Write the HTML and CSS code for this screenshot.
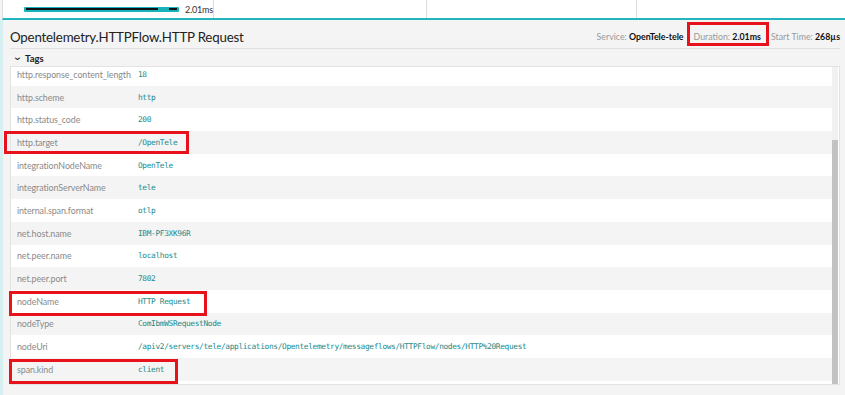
FILE: index.html
```html
<!DOCTYPE html>
<html>
<head>
<meta charset="utf-8">
<link rel="stylesheet" href="styles.css">
</head>
<body>
<div class="page">
  <div class="timeline">
    <div class="tl-cell tl-first">
      <div class="bar"><div class="bar-inner"></div><div class="bar-tail"></div></div>
      <span class="bar-label">2.01ms</span>
    </div>
    <div class="tl-cell tl-mid"></div>
    <div class="tl-cell tl-mid2"></div>
    <div class="tl-cell tl-last"></div>
  </div>
  <div class="detail">
    <div class="header">
      <h1 class="title">Opentelemetry.HTTPFlow.HTTP Request</h1>
      <div class="meta">
        <span class="meta-item">Service: <b>OpenTele-tele</b></span>
        <span class="meta-sep"></span>
        <span class="meta-item">Duration: <b>2.01ms</b></span>
        <span class="meta-item">Start Time: <b>268µs</b></span>
      </div>
    </div>
    <div class="tags-head"><span class="chev">&#8964;</span> Tags</div>
    <div class="table-wrap">
      <div class="table">
        <div class="row first"><span class="k">http.response_content_length</span><span class="v">18</span></div>
        <div class="row"><span class="k">http.scheme</span><span class="v">http</span></div>
        <div class="row"><span class="k">http.status_code</span><span class="v">200</span></div>
        <div class="row"><span class="k">http.target</span><span class="v">/OpenTele</span></div>
        <div class="row"><span class="k">integrationNodeName</span><span class="v">OpenTele</span></div>
        <div class="row"><span class="k">integrationServerName</span><span class="v">tele</span></div>
        <div class="row"><span class="k">internal.span.format</span><span class="v">otlp</span></div>
        <div class="row"><span class="k">net.host.name</span><span class="v">IBM-PF3XK96R</span></div>
        <div class="row"><span class="k">net.peer.name</span><span class="v">localhost</span></div>
        <div class="row"><span class="k">net.peer.port</span><span class="v">7802</span></div>
        <div class="row"><span class="k">nodeName</span><span class="v">HTTP Request</span></div>
        <div class="row"><span class="k">nodeType</span><span class="v">ComIbmWSRequestNode</span></div>
        <div class="row"><span class="k">nodeUri</span><span class="v">/apiv2/servers/tele/applications/Opentelemetry/messageflows/HTTPFlow/nodes/HTTP%20Request</span></div>
        <div class="row"><span class="k">span.kind</span><span class="v">client</span></div>
      </div>
      <div class="scrollbar"><div class="thumb"></div></div>
    </div>
  </div>
  <div class="mark mark-duration"></div>
  <div class="mark mark-target"></div>
  <div class="mark mark-node"></div>
  <div class="mark mark-kind"></div>
</div>
</body>
</html>
```

FILE: styles.css
```css
* { box-sizing: border-box; }
html, body { margin: 0; padding: 0; }
body {
  width: 845px;
  height: 395px;
  overflow: hidden;
  background: #f4f4f4;
  font-family: Lato, "Open Sans", sans-serif;
}
.page { position: relative; width: 845px; height: 395px; }

.timeline {
  display: flex;
  height: 20px;
  background: #fff;
  border-bottom: 2px solid #22b5be;
  border-left: 1px solid #ddd;
  margin-left: 2px;
}
.tl-cell { height: 18px; border-right: 1px solid #ddd; }
.tl-first { width: 211px; display: flex; align-items: center; padding-left: 21px; }
.tl-mid { width: 213px; }
.tl-mid2 { width: 210px; }
.tl-last { flex: 1; border-right: none; }
.bar {
  width: 160px; height: 5px; background: #17b3bb; border-radius: 1px;
  position: relative; display: flex; align-items: center;
}
.bar-inner { position: absolute; left: 2px; width: 132px; height: 2px; background: #111; }
.bar-tail { position: absolute; right: 2px; width: 8px; height: 2px; background: #111; }
.bar-label { font-size: 9px; color: #333; margin-left: 6px; letter-spacing: -0.2px; }

.detail {
  border-left: 3px solid #d6f0f2;
  padding: 0 5px 0 7px;
  height: 375px;
}
.header {
  display: flex;
  align-items: flex-end;
  justify-content: space-between;
  height: 29px;
  border-bottom: 1px solid #e0e0e0;
  padding-bottom: 2px;
}
.title {
  margin: 0;
  font-weight: 400;
  font-size: 13.3px;
  letter-spacing: -0.2px;
  color: #222;
  line-height: 18px;
}
.meta { display: flex; align-items: center; font-size: 8.8px; color: #999; line-height: 14px; padding-bottom: 2px; }
.meta b { color: #111; font-weight: 700; }
.meta-item { margin-left: 10px; }
.meta-sep { width: 1px; height: 12px; background: #ddd; margin-left: 4px; margin-right: -5px; }

.tags-head {
  font-size: 9.5px; font-weight: 700; color: #222;
  height: 17px; line-height: 18px; padding-left: 3px;
}
.chev { display: inline-block; font-weight: 400; font-size: 10px; transform: scaleX(1.3); margin-right: 2px; position: relative; top: -2px; }

.table-wrap {
  display: flex;
  height: 319px;
  border: 1px solid #e3e3e3;
  background: #fff;
  overflow: hidden;
}
.table { flex: 1; margin-top: -4px; }
.row {
  display: flex;
  align-items: center;
  height: 22.7px;
  padding-left: 6px;
}
.row:nth-child(even) { background: #f4f4f4; }
.k { width: 121px; font-size: 8.9px; letter-spacing: -0.08px; color: #8a8a8a; white-space: nowrap; }
.v { font-family: "DejaVu Sans Mono", "Liberation Mono", monospace; font-size: 7.8px; letter-spacing: -0.33px; color: #1a8a8c; white-space: nowrap; }

.scrollbar { width: 6px; background: #f1f1f1; margin-right: 1px; position: relative; }
.thumb { position: absolute; left: 0; right: 0; top: 73px; bottom: 0; background: #c2c2c2; }

.mark { position: absolute; border: 3px solid #e8121c; }
.mark-duration { left: 687px; top: 22px; width: 82px; height: 24px; }
.mark-target { left: 4px; top: 131px; width: 185px; height: 23px; }
.mark-node { left: 9px; top: 291px; width: 198px; height: 25px; }
.mark-kind { left: 9px; top: 359px; width: 169px; height: 25px; }
```
